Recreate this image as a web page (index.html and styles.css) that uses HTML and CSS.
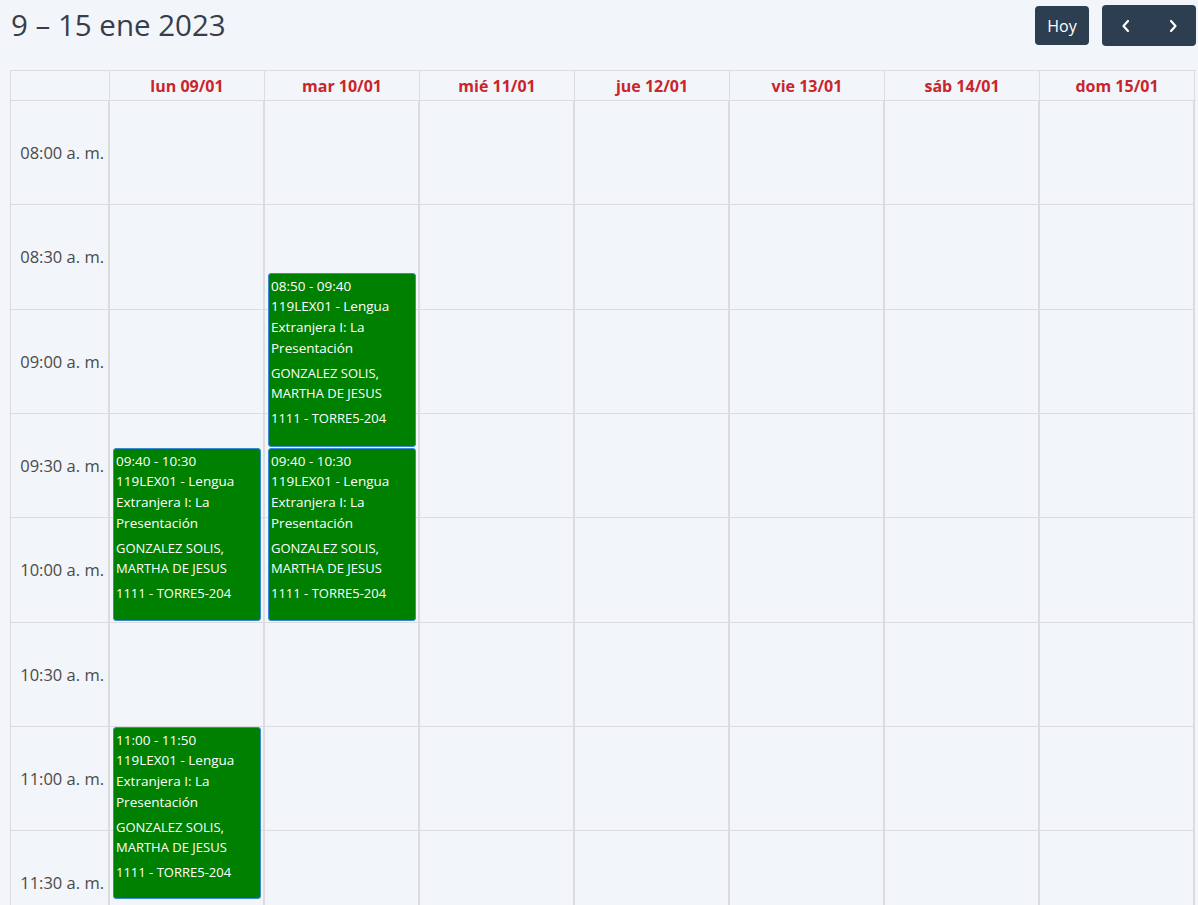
FILE: index.html
```html
<!DOCTYPE html>
<html lang="es">
<head>
<meta charset="utf-8">
<title>Horario</title>
<link rel="stylesheet" href="styles.css">
</head>
<body>
<div class="cal">
  <div class="toolbar">
    <h2 class="title">9 – 15 ene 2023</h2>
    <div class="actions">
      <button class="btn btn-today">Hoy</button>
      <div class="btn-group">
        <button class="btn btn-nav" aria-label="Anterior"><svg width="12" height="16" viewBox="0 0 12 16"><path d="M8 3 L3.5 8 L8 13" fill="none" stroke="#fff" stroke-width="2.2" stroke-linecap="round" stroke-linejoin="round"/></svg></button>
        <button class="btn btn-nav" aria-label="Siguiente"><svg width="12" height="16" viewBox="0 0 12 16"><path d="M4 3 L8.5 8 L4 13" fill="none" stroke="#fff" stroke-width="2.2" stroke-linecap="round" stroke-linejoin="round"/></svg></button>
      </div>
    </div>
  </div>

  <div class="grid">
    <div class="head">
      <div class="head-axis"></div>
      <div class="head-day">lun 09/01</div>
      <div class="head-day">mar 10/01</div>
      <div class="head-day">mié 11/01</div>
      <div class="head-day">jue 12/01</div>
      <div class="head-day">vie 13/01</div>
      <div class="head-day">sáb 14/01</div>
      <div class="head-day">dom 15/01</div>
    </div>
    <div class="body">
      <div class="axis">
        <div class="slot-label">08:00 a. m.</div>
        <div class="slot-label">08:30 a. m.</div>
        <div class="slot-label">09:00 a. m.</div>
        <div class="slot-label">09:30 a. m.</div>
        <div class="slot-label">10:00 a. m.</div>
        <div class="slot-label">10:30 a. m.</div>
        <div class="slot-label">11:00 a. m.</div>
        <div class="slot-label">11:30 a. m.</div>
      </div>

      <div class="day">
        <div class="slot"></div><div class="slot"></div><div class="slot"></div><div class="slot"></div><div class="slot"></div><div class="slot"></div><div class="slot"></div><div class="slot"></div>
        <div class="event" style="top:347px;height:173px">
          <div class="ev-time">09:40 - 10:30</div>
          <div class="ev-title">119LEX01 - Lengua Extranjera I: La Presentación</div>
          <div class="ev-teacher">GONZALEZ SOLIS, MARTHA DE JESUS</div>
          <div class="ev-room">1111 - TORRE5-204</div>
        </div>
        <div class="event" style="top:626px;height:172px">
          <div class="ev-time">11:00 - 11:50</div>
          <div class="ev-title">119LEX01 - Lengua Extranjera I: La Presentación</div>
          <div class="ev-teacher">GONZALEZ SOLIS, MARTHA DE JESUS</div>
          <div class="ev-room">1111 - TORRE5-204</div>
        </div>
      </div>

      <div class="day">
        <div class="slot"></div><div class="slot"></div><div class="slot"></div><div class="slot"></div><div class="slot"></div><div class="slot"></div><div class="slot"></div><div class="slot"></div>
        <div class="event" style="top:172px;height:174px">
          <div class="ev-time">08:50 - 09:40</div>
          <div class="ev-title">119LEX01 - Lengua Extranjera I: La Presentación</div>
          <div class="ev-teacher">GONZALEZ SOLIS, MARTHA DE JESUS</div>
          <div class="ev-room">1111 - TORRE5-204</div>
        </div>
        <div class="event" style="top:347px;height:173px">
          <div class="ev-time">09:40 - 10:30</div>
          <div class="ev-title">119LEX01 - Lengua Extranjera I: La Presentación</div>
          <div class="ev-teacher">GONZALEZ SOLIS, MARTHA DE JESUS</div>
          <div class="ev-room">1111 - TORRE5-204</div>
        </div>
      </div>

      <div class="day">
        <div class="slot"></div><div class="slot"></div><div class="slot"></div><div class="slot"></div><div class="slot"></div><div class="slot"></div><div class="slot"></div><div class="slot"></div>
      </div>
      <div class="day">
        <div class="slot"></div><div class="slot"></div><div class="slot"></div><div class="slot"></div><div class="slot"></div><div class="slot"></div><div class="slot"></div><div class="slot"></div>
      </div>
      <div class="day">
        <div class="slot"></div><div class="slot"></div><div class="slot"></div><div class="slot"></div><div class="slot"></div><div class="slot"></div><div class="slot"></div><div class="slot"></div>
      </div>
      <div class="day">
        <div class="slot"></div><div class="slot"></div><div class="slot"></div><div class="slot"></div><div class="slot"></div><div class="slot"></div><div class="slot"></div><div class="slot"></div>
      </div>
      <div class="day">
        <div class="slot"></div><div class="slot"></div><div class="slot"></div><div class="slot"></div><div class="slot"></div><div class="slot"></div><div class="slot"></div><div class="slot"></div>
      </div>
    </div>
  </div>
</div>
</body>
</html>
```

FILE: styles.css
```css
html, body {
  margin: 0;
  padding: 0;
  height: 100%;
  overflow: hidden;
}
body {
  background: #f2f5f9;
  font-family: "Open Sans", "Noto Sans", sans-serif;
  color: #333;
}
.cal {
  padding: 0 2px 0 10px;
}
.toolbar {
  display: flex;
  align-items: center;
  justify-content: space-between;
  height: 51px;
  margin-bottom: 19px;
}
.title {
  margin: 0 0 2px 1px;
  font-size: 29.5px;
  font-weight: 400;
  color: #373d4a;
}
.actions {
  display: flex;
  align-items: center;
  gap: 13px;
}
.btn {
  background: #2c3e50;
  border: 0;
  color: #fff;
  font-family: inherit;
  cursor: pointer;
}
.btn-today {
  width: 54px;
  height: 39px;
  border-radius: 4px;
  font-size: 16px;
}
.btn-group {
  display: flex;
  background: #2c3e50;
  border-radius: 4px;
  height: 41px;
}
.btn-nav {
  width: 47px;
  height: 41px;
  display: flex;
  align-items: center;
  justify-content: center;
  background: transparent;
  padding: 0;
}
.grid {
  border-left: 1px solid #dcdcdc;
  border-top: 1px solid #dcdcdc;
  width: 1185px;
}
.head {
  display: grid;
  grid-template-columns: 99px repeat(7, 155px);
  height: 29px;
  border-bottom: 1px solid #dcdcdc;
}
.head-axis, .head-day {
  border-right: 1px solid #dcdcdc;
}
.head-day {
  display: flex;
  align-items: center;
  justify-content: center;
  color: #c8262c;
  font-weight: 700;
  font-size: 16px;
  padding-top: 1px;
}
.body {
  display: grid;
  grid-template-columns: 99px repeat(7, 155px);
}
.axis {
  border-right: 2px solid #dcdcdc;
}
.slot-label {
  height: 104.33px;
  box-sizing: border-box;
  border-bottom: 1px solid #dcdcdc;
  display: flex;
  align-items: center;
  justify-content: flex-end;
  padding-right: 4px;
  font-size: 16.5px;
  color: #4a4a4a;
}
.day {
  position: relative;
  border-right: 2px solid #dcdcdc;
}
.slot {
  height: 104.33px;
  box-sizing: border-box;
  border-bottom: 1px solid #dcdcdc;
}
.event {
  position: absolute;
  left: 3px;
  right: 2px;
  box-sizing: border-box;
  background: #008000;
  border: 1px solid #3a87d8;
  border-radius: 3px;
  padding: 2px 2px 0 2px;
  color: #fff;
  font-size: 13.5px;
  overflow: hidden;
}
.ev-time {
  line-height: 20px;
}
.ev-title {
  line-height: 21px;
}
.ev-teacher {
  margin-top: 4px;
  line-height: 20px;
  font-size: 13px;
}
.ev-room {
  margin-top: 5px;
  line-height: 20px;
  font-size: 13px;
}
```
